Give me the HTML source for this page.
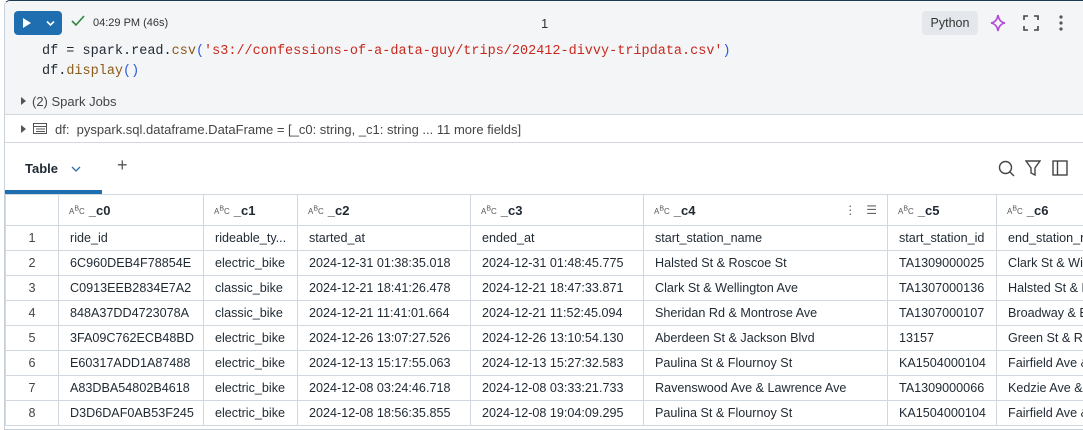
<!DOCTYPE html>
<html><head><meta charset="utf-8"><style>
*{box-sizing:border-box;margin:0;padding:0}
body{width:1083px;height:418px;overflow:hidden;background:#fff;font-family:"Liberation Sans",sans-serif;position:relative;color:#1f2933}
.cell{position:absolute;left:4px;top:0;width:1090px;height:430px;border:1px solid #c8d2dc;border-top:1.5px solid #1e3a56;border-radius:6px 0 0 0;overflow:hidden}
.top{position:absolute;left:0;top:0;width:100%;height:114px;background:#f4f5f7;border-bottom:1px solid #d3d8de}
.run{position:absolute;left:9px;top:10px;width:48px;height:24px;background:#1f6fb0;border-radius:4px}
.abs{position:absolute;white-space:nowrap}
.code{font-family:"Liberation Mono",monospace;font-size:13.5px;color:#1f2933}
.df{position:absolute;left:0;top:114px;width:100%;height:28px;border-bottom:1px solid #d3d8de;background:#fff}
table{position:absolute;left:0;top:193px;width:1091px;border-collapse:collapse;font-size:12.6px;table-layout:fixed}
td,th{border:1px solid #d1d7de;height:25px;padding:0 11px;white-space:nowrap;overflow:hidden;text-align:left;font-weight:normal}
th{height:31px;font-weight:bold;font-size:13px;padding-left:10px}
td.n{text-align:center;color:#444;padding:0}
.abc{font-size:8px;font-weight:normal;color:#555;margin-right:4px;position:relative;top:-1px}
.abc sup{font-size:7px}
</style></head><body>
<div class="cell">
 <div class="top">
  <div class="run"><svg width="48" height="24"><path d="M9 7 L17 12 L9 17Z" fill="#fff"/><path d="M33 10.5 L36.5 14 L40 10.5" stroke="#fff" stroke-width="1.6" fill="none"/></svg></div>
  <svg class="abs" style="left:66px;top:14px" width="14" height="12"><path d="M1 6 L5 10 L13 1" stroke="#2e8540" stroke-width="1.6" fill="none"/></svg>
  <div class="abs" style="left:88px;top:16px;font-size:11px;color:#333">04:29 PM (46s)</div>
  <div class="abs" style="left:536px;top:15px;font-size:13px;color:#333">1</div>
  <div class="abs" style="left:917px;top:10px;width:56px;height:24px;background:#e4e8ec;border-radius:4px;font-size:12.5px;line-height:24px;text-align:center;color:#333">Python</div>
  <svg class="abs" style="left:985px;top:13px" width="16" height="18"><path d="M8 1 Q9 8 15 9 Q9 10 8 17 Q7 10 1 9 Q7 8 8 1Z" fill="none" stroke="#b34bd9" stroke-width="1.6"/></svg>
  <svg class="abs" style="left:1018px;top:14px" width="16" height="16"><path d="M1 5V1H5M11 1H15V5M15 11V15H11M5 15H1V11" stroke="#444" stroke-width="1.6" fill="none"/></svg>
  <svg class="abs" style="left:1053px;top:13px" width="6" height="18"><circle cx="3" cy="3" r="1.6" fill="#555"/><circle cx="3" cy="9" r="1.6" fill="#555"/><circle cx="3" cy="15" r="1.6" fill="#555"/></svg>
  <div class="abs code" style="left:37px;top:43px">df = spark.read.<span style="color:#8a5a1a">csv</span><span style="color:#2a5bd7">(</span><span style="color:#c7291e">'s3://confessions-of-a-data-guy/trips/202412-divvy-tripdata.csv'</span><span style="color:#2a5bd7">)</span></div>
  <div class="abs code" style="left:37px;top:63px">df.<span style="color:#8a5a1a">display</span><span style="color:#2a5bd7">()</span></div>
  <svg class="abs" style="left:16px;top:96px" width="6" height="8"><path d="M0 0L5 4L0 8Z" fill="#555"/></svg>
  <div class="abs" style="left:27px;top:93px;font-size:13px;color:#444">(2) Spark Jobs</div>
 </div>
 <div class="df">
  <svg class="abs" style="left:16px;top:10px" width="6" height="8"><path d="M0 0L5 4L0 8Z" fill="#555"/></svg>
  <svg class="abs" style="left:28px;top:8px" width="14" height="11"><rect x="0.5" y="0.5" width="13" height="10" fill="none" stroke="#555"/><path d="M0 3.5H14M3 6H12M3 8.5H12" stroke="#555"/></svg>
  <div class="abs" style="left:50px;top:7px;font-size:13px;color:#444">df:&nbsp; pyspark.sql.dataframe.DataFrame = [_c0: string, _c1: string ... 11 more fields]</div>
 </div>
 <div class="abs" style="left:20px;top:160px;font-size:13px;font-weight:bold;color:#1f2933">Table</div>
 <svg class="abs" style="left:66px;top:165px" width="10" height="6"><path d="M1 1L5 5L9 1" stroke="#2a6db0" stroke-width="1.3" fill="none"/></svg>
 <div class="abs" style="left:112px;top:154px;font-size:18px;color:#555;font-weight:300">+</div>
 <div class="abs" style="left:0;top:189px;width:97px;height:4px;background:#1f6fb0"></div>
 <svg class="abs" style="left:993px;top:159px" width="18" height="18"><circle cx="7.5" cy="7.5" r="6" stroke="#444" stroke-width="1.4" fill="none"/><path d="M12 12L16 16" stroke="#444" stroke-width="1.4"/></svg>
 <svg class="abs" style="left:1020px;top:159px" width="16" height="17"><path d="M1 1H15L10 8V15L6 13V8Z" stroke="#444" stroke-width="1.4" fill="none"/></svg>
 <svg class="abs" style="left:1047px;top:159px" width="16" height="16"><rect x="1" y="1" width="14" height="14" stroke="#444" stroke-width="1.4" fill="none"/><path d="M5.5 1V15" stroke="#444" stroke-width="1.4"/></svg>
 <table>
  <colgroup><col style="width:53px"><col style="width:145px"><col style="width:94px"><col style="width:173px"><col style="width:173px"><col style="width:244px"><col style="width:109px"><col style="width:100px"></colgroup>
  <tr><th></th><th><span class="abc">A<sup>B</sup>C</span>_c0</th><th><span class="abc">A<sup>B</sup>C</span>_c1</th><th><span class="abc">A<sup>B</sup>C</span>_c2</th><th><span class="abc">A<sup>B</sup>C</span>_c3</th><th style="position:relative"><span class="abc">A<sup>B</sup>C</span>_c4<span style="position:absolute;right:10px;top:8px;color:#666;font-weight:normal;font-size:12px">⋮&nbsp;&nbsp;&nbsp;☰</span></th><th><span class="abc">A<sup>B</sup>C</span>_c5</th><th><span class="abc">A<sup>B</sup>C</span>_c6</th></tr>
  <tr><td class="n">1</td><td>ride_id</td><td>rideable_ty...</td><td>started_at</td><td>ended_at</td><td>start_station_name</td><td>start_station_id</td><td>end_station_name</td></tr>
  <tr><td class="n">2</td><td>6C960DEB4F78854E</td><td>electric_bike</td><td>2024-12-31 01:38:35.018</td><td>2024-12-31 01:48:45.775</td><td>Halsted St &amp; Roscoe St</td><td>TA1309000025</td><td>Clark St &amp; Wi</td></tr>
  <tr><td class="n">3</td><td>C0913EEB2834E7A2</td><td>classic_bike</td><td>2024-12-21 18:41:26.478</td><td>2024-12-21 18:47:33.871</td><td>Clark St &amp; Wellington Ave</td><td>TA1307000136</td><td>Halsted St &amp; R</td></tr>
  <tr><td class="n">4</td><td>848A37DD4723078A</td><td>classic_bike</td><td>2024-12-21 11:41:01.664</td><td>2024-12-21 11:52:45.094</td><td>Sheridan Rd &amp; Montrose Ave</td><td>TA1307000107</td><td>Broadway &amp; E</td></tr>
  <tr><td class="n">5</td><td>3FA09C762ECB48BD</td><td>electric_bike</td><td>2024-12-26 13:07:27.526</td><td>2024-12-26 13:10:54.130</td><td>Aberdeen St &amp; Jackson Blvd</td><td>13157</td><td>Green St &amp; Ra</td></tr>
  <tr><td class="n">6</td><td>E60317ADD1A87488</td><td>electric_bike</td><td>2024-12-13 15:17:55.063</td><td>2024-12-13 15:27:32.583</td><td>Paulina St &amp; Flournoy St</td><td>KA1504000104</td><td>Fairfield Ave &amp;</td></tr>
  <tr><td class="n">7</td><td>A83DBA54802B4618</td><td>electric_bike</td><td>2024-12-08 03:24:46.718</td><td>2024-12-08 03:33:21.733</td><td>Ravenswood Ave &amp; Lawrence Ave</td><td>TA1309000066</td><td>Kedzie Ave &amp;</td></tr>
  <tr><td class="n">8</td><td>D3D6DAF0AB53F245</td><td>electric_bike</td><td>2024-12-08 18:56:35.855</td><td>2024-12-08 19:04:09.295</td><td>Paulina St &amp; Flournoy St</td><td>KA1504000104</td><td>Fairfield Ave &amp;</td></tr>
 </table>
</div>
</body></html>
